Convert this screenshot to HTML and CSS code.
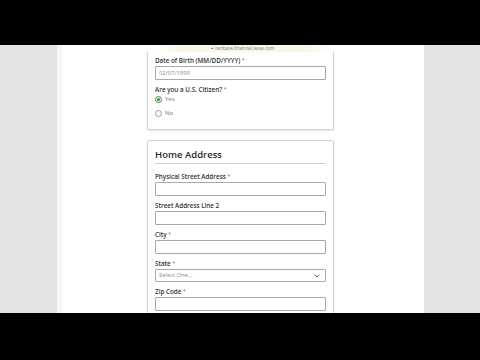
FILE: index.html
```html
<!DOCTYPE html>
<html>
<head>
<meta charset="utf-8">
<link rel="stylesheet" href="styles.css">
</head>
<body>
<div class="screen">
  <div class="page">
    <div class="urlbar"><span class="lock">&#9650;</span> certbase.financial.texas.com</div>
    <div class="card card-top">
      <div class="field">
        <div class="label">Date of Birth (MM/DD/YYYY) <span class="req">*</span></div>
        <div class="input value">02/07/1999</div>
      </div>
      <div class="label">Are you a U.S. Citizen? <span class="req">*</span></div>
      <div class="radio-row"><span class="radio checked"></span><span class="opt">Yes</span></div>
      <div class="radio-row"><span class="radio"></span><span class="opt">No</span></div>
    </div>
    <div class="card card-second">
      <div class="heading">Home Address</div>
      <div class="rule"></div>
      <div class="field">
        <div class="label">Physical Street Address <span class="req">*</span></div>
        <div class="input"></div>
      </div>
      <div class="field">
        <div class="label">Street Address Line 2</div>
        <div class="input"></div>
      </div>
      <div class="field">
        <div class="label">City <span class="req">*</span></div>
        <div class="input"></div>
      </div>
      <div class="field">
        <div class="label">State <span class="req">*</span></div>
        <div class="input select"><span class="value">Select One...</span>
          <svg class="chev" width="6" height="4" viewBox="0 0 6 4"><path d="M0.6 0.6 L3 3 L5.4 0.6" fill="none" stroke="#555" stroke-width="0.9"/></svg>
        </div>
      </div>
      <div class="field">
        <div class="label">Zip Code <span class="req">*</span></div>
        <div class="input"></div>
      </div>
    </div>
  </div>
</div>
</body>
</html>
```

FILE: styles.css
```css
html, body {
  margin: 0;
  padding: 0;
  background: #000;
  width: 480px;
  height: 360px;
  overflow: hidden;
}
.screen {
  margin-top: 45px;
  height: 268px;
  background: #e4e4e4;
  display: flex;
  justify-content: center;
  overflow: hidden;
  font-family: "Open Sans", "Liberation Sans", sans-serif;
}
.page {
  width: 367px;
  background: #fff;
  border-left: 5px solid #f6f6f6;
  box-sizing: border-box;
  display: flex;
  flex-direction: column;
  align-items: center;
}
.urlbar {
  width: 180px;
  height: 7px;
  line-height: 7px;
  font-size: 4.5px;
  color: #777;
  text-align: center;
  background: linear-gradient(90deg, #fff 0%, #faf7ea 15%, #faf7ea 85%, #fff 100%);
}
.lock {
  font-size: 3px;
  color: #444;
  vertical-align: 1px;
}
.card {
  width: 187px;
  box-sizing: border-box;
  border: 1px solid #d2d2d2;
  border-radius: 2px;
  box-shadow: 0 1px 2px rgba(0,0,0,0.12);
  padding: 0 7px;
  margin-left: -4px;
}
.card-top {
  border-top: none;
  border-top-left-radius: 0;
  border-top-right-radius: 0;
  padding-top: 5px;
  padding-bottom: 7px;
}
.card-second {
  margin-top: 10px;
  padding-top: 7px;
  padding-bottom: 20px;
}
.heading {
  font-size: 9.5px;
  line-height: 13px;
  height: 13px;
  font-weight: 600;
  color: #2a2a2a;
}
.rule {
  height: 1px;
  background: #cfcfcf;
  margin-top: 2px;
  margin-bottom: 9px;
}
.field {
  margin-bottom: 6px;
}
.label {
  font-size: 6.3px;
  line-height: 8px;
  height: 8px;
  font-weight: 600;
  color: #333;
  white-space: nowrap;
}
.field .label {
  margin-bottom: 1px;
}
.req {
  color: #b24a3a;
  font-weight: 400;
  font-size: 5px;
  line-height: 0;
  vertical-align: 1px;
}
.input {
  height: 14px;
  box-sizing: border-box;
  border: 1px solid #a9a9a9;
  border-radius: 1px;
  background: #fff;
  font-size: 5.8px;
  line-height: 12px;
  padding: 0 3px;
}
.value {
  color: #8a8a8a;
}
.select {
  height: 13px;
  line-height: 11px;
  display: flex;
  justify-content: space-between;
  align-items: center;
}
.chev {
  margin-right: 2px;
}
.radio-row {
  display: flex;
  align-items: center;
  height: 10px;
  margin-bottom: 4px;
}
.radio-row + .radio-row {
  margin-top: 1px;
}
.radio {
  width: 7px;
  height: 7px;
  box-sizing: border-box;
  border: 1px solid #9a9a9a;
  border-radius: 50%;
  margin-right: 3px;
  position: relative;
  background: #fff;
}
.radio.checked {
  border-color: #3d8b3d;
}
.radio.checked::after {
  content: "";
  position: absolute;
  left: 1px;
  top: 1px;
  width: 3px;
  height: 3px;
  border-radius: 50%;
  background: #3d8b3d;
}
.opt {
  font-size: 6px;
  color: #777;
  line-height: 8px;
}
```
